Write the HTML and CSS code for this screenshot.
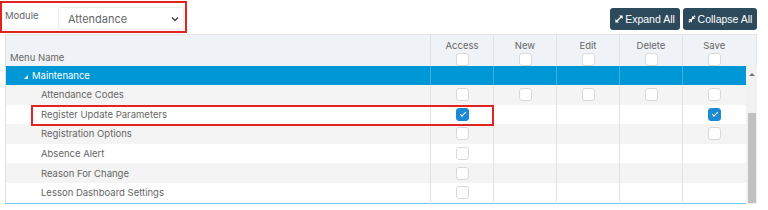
FILE: index.html
```html
<!DOCTYPE html>
<html lang="en">
<head>
    <meta charset="UTF-8">
    <meta name="viewport" content="width=device-width, initial-scale=1.0">
    <title>Menu Permissions</title>
    <link rel="stylesheet" href="styles.css">
</head>
<body>
    <!-- Toolbar -->
    <div class="toolbar">
        <div class="module-filter">
            <label for="module">Module</label>
            <div class="select-box">
                <span>Attendance</span>
                <svg class="chevron" width="8" height="6" viewBox="0 0 8 6"><path d="M1 1.5 L4 4.5 L7 1.5" fill="none" stroke="#444" stroke-width="1.5"/></svg>
            </div>
        </div>
        <div class="actions">
            <button class="tool-btn">
                <svg width="8" height="8" viewBox="0 0 10 10"><path d="M1.5 8.5 L8.5 1.5" fill="none" stroke="#fff" stroke-width="1.6"/><path d="M5 0.5 H9.5 V5 Z M0.5 5 V9.5 H5 Z" fill="#fff"/></svg>
                Expand All
            </button>
            <button class="tool-btn">
                <svg width="8" height="8" viewBox="0 0 10 10"><path d="M1 9 L9 1" fill="none" stroke="#fff" stroke-width="1.6"/><path d="M5 1 V5 H9 Z M0.5 5 H5 V9.5 Z" fill="#fff"/></svg>
                Collapse All
            </button>
        </div>
    </div>

    <!-- Permissions grid -->
    <div class="grid">
        <table class="perm-table">
            <colgroup>
                <col class="col-name">
                <col class="col-perm">
                <col class="col-perm">
                <col class="col-perm">
                <col class="col-perm">
                <col class="col-perm">
            </colgroup>
            <thead>
                <tr>
                    <th class="name-head">Menu Name</th>
                    <th>Access<span class="cb"></span></th>
                    <th>New<span class="cb"></span></th>
                    <th>Edit<span class="cb"></span></th>
                    <th>Delete<span class="cb"></span></th>
                    <th>Save<span class="cb"></span></th>
                </tr>
            </thead>
            <tbody>
                <tr class="group-row">
                    <td><span class="tree-icon"></span>Maintenance</td>
                    <td></td><td></td><td></td><td></td><td></td>
                </tr>
                <tr class="alt">
                    <td class="child">Attendance Codes</td>
                    <td><span class="cb"></span></td>
                    <td><span class="cb"></span></td>
                    <td><span class="cb"></span></td>
                    <td><span class="cb"></span></td>
                    <td><span class="cb"></span></td>
                </tr>
                <tr>
                    <td class="child">Register Update Parameters</td>
                    <td><span class="cb checked"></span></td>
                    <td></td><td></td><td></td>
                    <td><span class="cb checked"></span></td>
                </tr>
                <tr class="alt">
                    <td class="child">Registration Options</td>
                    <td><span class="cb"></span></td>
                    <td></td><td></td><td></td>
                    <td><span class="cb"></span></td>
                </tr>
                <tr>
                    <td class="child">Absence Alert</td>
                    <td><span class="cb"></span></td>
                    <td></td><td></td><td></td><td></td>
                </tr>
                <tr class="alt">
                    <td class="child">Reason For Change</td>
                    <td><span class="cb"></span></td>
                    <td></td><td></td><td></td><td></td>
                </tr>
                <tr>
                    <td class="child">Lesson Dashboard Settings</td>
                    <td><span class="cb"></span></td>
                    <td></td><td></td><td></td><td></td>
                </tr>
            </tbody>
        </table>

        <div class="vscroll">
            <div class="vscroll-head"></div>
            <div class="vscroll-track">
                <span class="vscroll-arrow"></span>
                <div class="vscroll-thumb"></div>
            </div>
        </div>

        <!-- highlight -->
        <div class="highlight"></div>
    </div>
</body>
</html>
```

FILE: styles.css
```css
/* General */
body {
    font-family: 'Inter', 'Liberation Sans', sans-serif;
    margin: 0;
    padding: 0;
    background-color: #fff;
    color: #666;
}

.toolbar {
    display: flex;
    justify-content: space-between;
    align-items: flex-start;
    width: 757px;
    padding-top: 1px;
    height: 33px;
}

.module-filter {
    display: flex;
    align-items: center;
    width: 183px;
    height: 28px;
    border: 2px solid #e3231f;
}

.module-filter label {
    font-size: 9.5px;
    color: #666;
    padding-left: 3px;
    width: 53px;
    margin-top: -4px;
}

.select-box {
    display: flex;
    align-items: center;
    justify-content: space-between;
    box-sizing: border-box;
    width: 126px;
    height: 23px;
    margin-top: 3px;
    padding: 0 4px 0 9px;
    border: 1px solid #ececec;
    border-radius: 3px;
    font-size: 11px;
    color: #666;
}

.actions {
    display: flex;
    gap: 3px;
    padding-top: 7px;
}

.tool-btn {
    display: flex;
    align-items: center;
    justify-content: center;
    gap: 2px;
    height: 22px;
    padding: 0;
    background-color: #2d4a5d;
    color: #fff;
    font-family: 'Liberation Sans', sans-serif;
    font-size: 10.5px;
    border: none;
    border-radius: 3px;
}

.tool-btn:first-child {
    width: 70px;
}

.tool-btn:last-child {
    width: 74px;
}

/* Grid */
.grid {
    position: relative;
    display: flex;
    margin-left: 5px;
    width: 752px;
}

.perm-table {
    table-layout: fixed;
    width: 740px;
    border-collapse: collapse;
    border-left: 1px solid #dfe3e8;
    border-top: 1px solid #e3e7ec;
    border-bottom: 1px solid #6ec6f0;
    font-size: 9.5px;
}

.col-name {
    width: 425px;
}

.col-perm {
    width: 63px;
}

.perm-table th {
    height: 31px;
    padding: 0;
    background-color: #eff3f7;
    font-weight: normal;
    color: #666;
    border-left: 1px solid #dde2e7;
    vertical-align: top;
    padding-top: 5px;
    box-sizing: border-box;
}

.perm-table th .cb {
    display: block;
    margin: 2px auto 0;
}

.perm-table th.name-head {
    text-align: left;
    vertical-align: bottom;
    padding: 0 0 3px 4px;
    border-left: none;
}

.perm-table td {
    height: 19.6px;
    padding: 0;
    text-align: center;
    border-left: 1px solid #e2e2e2;
    color: #666;
}

.perm-table td:first-child {
    text-align: left;
    border-left: none;
}

.perm-table td .cb {
    display: block;
    margin: 0 auto;
}

.perm-table tr.alt td {
    background-color: #f4f4f4;
}

.group-row td {
    background-color: #0097d6;
    border-left-color: #3cb0e3;
    height: 19px;
}

.perm-table .group-row td:first-child {
    color: #fff;
    padding-left: 18px;
}

.tree-icon {
    display: inline-block;
    width: 0;
    height: 0;
    border-left: 4px solid transparent;
    border-bottom: 4px solid #fff;
    margin-right: 4px;
}

td.child {
    padding-left: 35px;
}

/* Checkbox */
.cb {
    width: 11px;
    height: 11px;
    border: 1px solid #d9d9d9;
    border-radius: 3px;
    background-color: #fff;
}

.cb.checked {
    position: relative;
    background-color: #1a8ad3;
    border-color: #1a8ad3;
}

.cb.checked::after {
    content: '';
    position: absolute;
    left: 3px;
    top: 3px;
    width: 5px;
    height: 2px;
    border-left: 1.5px solid #fff;
    border-bottom: 1.5px solid #fff;
    transform: rotate(-45deg);
}

/* Scrollbar */
.vscroll {
    width: 12px;
    display: flex;
    flex-direction: column;
}

.vscroll-head {
    height: 32px;
    background-color: #eff3f7;
    border-top: 1px solid #e3e7ec;
    border-right: 1px solid #e3e7ec;
    box-sizing: border-box;
}

.vscroll-track {
    position: relative;
    flex: 1;
    background-color: #f1f1f1;
}

.vscroll-arrow {
    position: absolute;
    left: 3px;
    top: 7px;
    width: 0;
    height: 0;
    border-left: 3px solid transparent;
    border-right: 3px solid transparent;
    border-bottom: 3px solid #777;
}

.vscroll-thumb {
    position: absolute;
    left: 2px;
    top: 47px;
    width: 8px;
    height: 90px;
    background-color: #c1c1c1;
}

.highlight {
    position: absolute;
    left: 26px;
    top: 71px;
    width: 459px;
    height: 17px;
    border: 2px solid #e3231f;
}
```
